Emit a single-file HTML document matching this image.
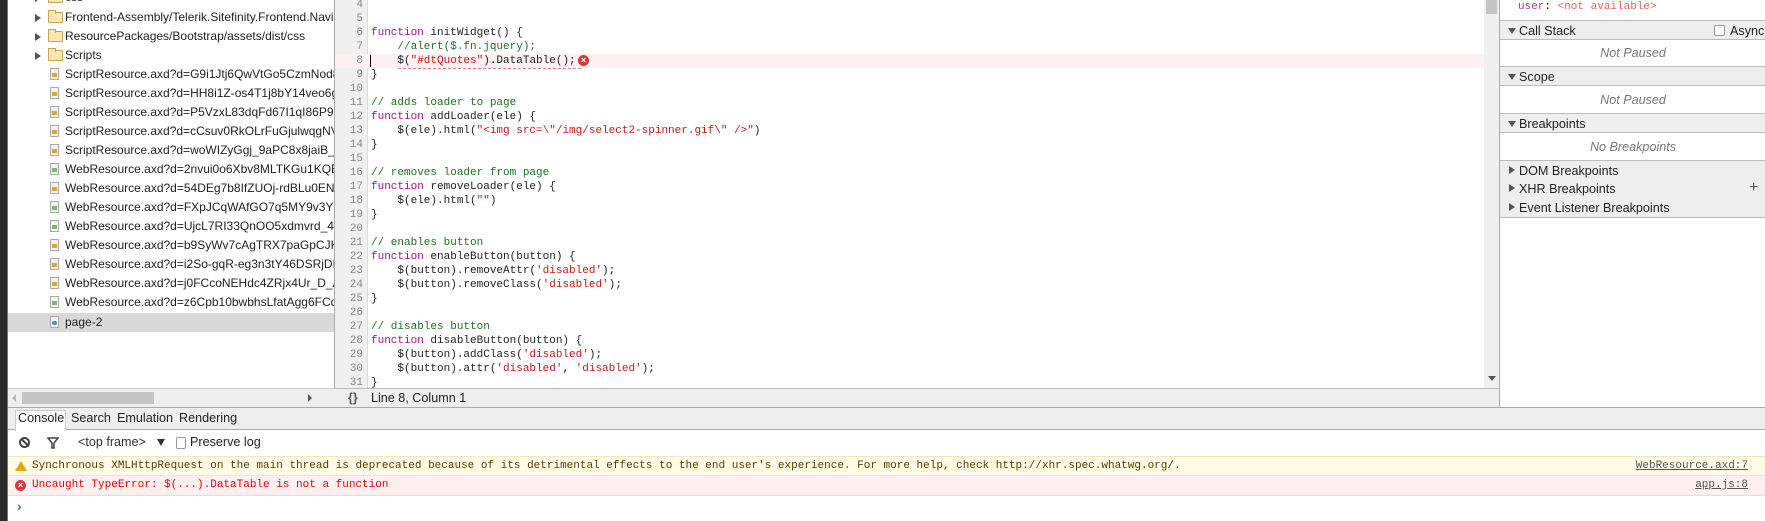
<!DOCTYPE html>
<html><head><meta charset="utf-8"><style>
*{margin:0;padding:0;box-sizing:border-box}
body{width:1765px;height:521px;overflow:hidden;background:#fff;position:relative;font-family:"Liberation Sans",sans-serif;font-size:12px;color:#222}
.abs{position:absolute}
.strip{left:0;top:0;width:8px;height:521px;background:#2b2b2b;border-right:1px solid #777}
#side{left:8px;top:0;width:326px;height:388px;overflow:hidden;background:#fff}
.row{position:absolute;left:0;width:326px;height:19px;line-height:19px;white-space:nowrap;font-size:12px;color:#222}
.arr{position:absolute;left:27px;top:6px;width:0;height:0;border-left:6px solid #555;border-top:4px solid transparent;border-bottom:4px solid transparent}
.fold{position:absolute;left:40px;top:4px;width:15px;height:11px;background:#fbe8b0;border:1px solid #c9a454;border-radius:1px}
.fold:before{content:"";position:absolute;left:-1px;top:-3px;width:6px;height:3px;background:#fbe8b0;border:1px solid #c9a454;border-bottom:none}
.file{position:absolute;left:42px;top:3px;width:9px;height:12px;background:#f2f2f2;border:1px solid #aaa}
.file i{position:absolute;left:1px;top:4px;width:5px;height:4px}
.js i{background:#e3a23b}.css i{background:#7bb86a}.htm i{background:#4a8ee0;border-radius:2px}
.row span{position:absolute;left:57px}
#hs{left:8px;top:388px;width:326px;height:19px;background:#eee;border-top:1px solid #ccc}
#code{left:334px;top:0;width:1150px;height:388px;overflow:hidden;border-left:1px solid #aaa}
#gut{position:absolute;left:0;top:0;width:33px;height:388px;background:#f0f0f0;border-right:1px solid #ddd}
.ln{position:absolute;left:0;width:1150px;height:14px;line-height:14px;font-family:"Liberation Mono",monospace;font-size:11px;white-space:pre}
.ln b{font-weight:normal;position:absolute;left:0;width:28px;text-align:right;color:#888}
.ln span{position:absolute;left:36px}
.k{color:#aa0d91}.c{color:#236e25}.s{color:#c41a16}
#vs{left:1484px;top:0;width:15px;height:388px;background:#f0f0f0}
#right{left:1499px;top:0;width:266px;height:407px;border-left:1px solid #aaa;background:#fff}
.hd{position:absolute;left:0;width:266px;height:20px;line-height:20px;background:#eee;border-top:1px solid #bbb;border-bottom:1px solid #bbb;font-size:12.6px;color:#222}
.hd span{position:absolute;left:19px}
.td{position:absolute;left:8px;top:7px;width:0;height:0;border-top:6px solid #555;border-left:4px solid transparent;border-right:4px solid transparent}
.tr{position:absolute;left:9px;top:5px;width:0;height:0;border-left:6px solid #555;border-top:4px solid transparent;border-bottom:4px solid transparent}
.np{position:absolute;left:0;width:266px;text-align:center;font-style:italic;color:#777;font-size:12.6px}
#status{left:334px;top:388px;width:1165px;height:19px;background:#eee;border-top:1px solid #bbb;font-size:12.6px;line-height:18px}
#tabs{left:8px;top:407px;width:1757px;height:23px;background:#eee;border-top:1px solid #aaa;border-bottom:1px solid #aaa;font-size:12.6px}
#tabs span{position:absolute;top:3px}
#tb{left:8px;top:430px;width:1757px;height:26px;font-size:12.6px}
.msg{position:absolute;left:8px;width:1757px;height:20px;line-height:19px;font-family:"Liberation Mono",monospace;font-size:11px;white-space:pre}
.msg span{position:absolute;left:24px}
.msg u{position:absolute;right:17px;color:#555}
</style></head><body>
<div class="abs strip"></div>
<div class="abs" id="side">
<div class="row" style="top:-12px"><div class="arr"></div><div class="fold"></div><span>css</span></div>
<div class="row" style="top:8px"><div class="arr"></div><div class="fold"></div><span>Frontend-Assembly/Telerik.Sitefinity.Frontend.Navigation</span></div>
<div class="row" style="top:27px"><div class="arr"></div><div class="fold"></div><span>ResourcePackages/Bootstrap/assets/dist/css</span></div>
<div class="row" style="top:46px"><div class="arr"></div><div class="fold"></div><span>Scripts</span></div>
<div class="row" style="top:65px"><div class="file js"><i></i></div><span>ScriptResource.axd?d=G9i1Jtj6QwVtGo5CzmNod8r</span></div>
<div class="row" style="top:84px"><div class="file js"><i></i></div><span>ScriptResource.axd?d=HH8i1Z-os4T1j8bY14veo6gr</span></div>
<div class="row" style="top:103px"><div class="file js"><i></i></div><span>ScriptResource.axd?d=P5VzxL83dqFd67I1qI86P9d8</span></div>
<div class="row" style="top:122px"><div class="file js"><i></i></div><span>ScriptResource.axd?d=cCsuv0RkOLrFuGjulwqgNVm</span></div>
<div class="row" style="top:141px"><div class="file js"><i></i></div><span>ScriptResource.axd?d=woWIZyGgj_9aPC8x8jaiB_hc</span></div>
<div class="row" style="top:160px"><div class="file css"><i></i></div><span>WebResource.axd?d=2nvui0o6Xbv8MLTKGu1KQBe</span></div>
<div class="row" style="top:179px"><div class="file js"><i></i></div><span>WebResource.axd?d=54DEg7b8IfZUOj-rdBLu0ENU</span></div>
<div class="row" style="top:198px"><div class="file css"><i></i></div><span>WebResource.axd?d=FXpJCqWAfGO7q5MY9v3YR8</span></div>
<div class="row" style="top:217px"><div class="file css"><i></i></div><span>WebResource.axd?d=UjcL7RI33QnOO5xdmvrd_406</span></div>
<div class="row" style="top:236px"><div class="file js"><i></i></div><span>WebResource.axd?d=b9SyWv7cAgTRX7paGpCJKhv</span></div>
<div class="row" style="top:255px"><div class="file js"><i></i></div><span>WebResource.axd?d=i2So-gqR-eg3n3tY46DSRjDPe</span></div>
<div class="row" style="top:274px"><div class="file js"><i></i></div><span>WebResource.axd?d=j0FCcoNEHdc4ZRjx4Ur_D_A_X</span></div>
<div class="row" style="top:293px"><div class="file css"><i></i></div><span>WebResource.axd?d=z6Cpb10bwbhsLfatAgg6FCdF</span></div>
<div class="row" style="top:313px;background:#d9d9d9"><div class="file htm"><i></i></div><span>page-2</span></div>
</div>
<div class="abs" id="hs"><div class="abs" style="left:14px;top:3px;width:132px;height:12px;background:#c4c4c4"></div><div class="abs" style="left:4px;top:5px;border-right:4px solid #bbb;border-top:4px solid transparent;border-bottom:4px solid transparent"></div><div class="abs" style="left:300px;top:5px;border-left:4px solid #555;border-top:4px solid transparent;border-bottom:4px solid transparent"></div></div>

<div class="abs" id="code">
<div id="gut"></div>
<div class="abs" style="left:0;top:54px;width:1150px;height:14px;background:#fff1f1"></div>
<div class="ln" style="top:-2px"><b>4</b></div>
<div class="ln" style="top:12px"><b>5</b></div>
<div class="ln" style="top:26px"><b>6</b><span><i class="k" style="font-style:normal">function</i> initWidget() {</span></div>
<div class="ln" style="top:40px"><b>7</b><span class="c">    //alert($.fn.jquery);</span></div>
<div class="ln" style="top:54px"><b>8</b><span>    $(<i class="s" style="font-style:normal">"#dtQuotes"</i>).DataTable();</span></div>
<div class="ln" style="top:68px"><b>9</b><span>}</span></div>
<div class="ln" style="top:82px"><b>10</b></div>
<div class="ln" style="top:96px"><b>11</b><span class="c">// adds loader to page</span></div>
<div class="ln" style="top:110px"><b>12</b><span><i class="k" style="font-style:normal">function</i> addLoader(ele) {</span></div>
<div class="ln" style="top:124px"><b>13</b><span>    $(ele).html(<i class="s" style="font-style:normal">"&lt;img src=\"/img/select2-spinner.gif\" /&gt;"</i>)</span></div>
<div class="ln" style="top:138px"><b>14</b><span>}</span></div>
<div class="ln" style="top:152px"><b>15</b></div>
<div class="ln" style="top:166px"><b>16</b><span class="c">// removes loader from page</span></div>
<div class="ln" style="top:180px"><b>17</b><span><i class="k" style="font-style:normal">function</i> removeLoader(ele) {</span></div>
<div class="ln" style="top:194px"><b>18</b><span>    $(ele).html(<i class="s" style="font-style:normal">""</i>)</span></div>
<div class="ln" style="top:208px"><b>19</b><span>}</span></div>
<div class="ln" style="top:222px"><b>20</b></div>
<div class="ln" style="top:236px"><b>21</b><span class="c">// enables button</span></div>
<div class="ln" style="top:250px"><b>22</b><span><i class="k" style="font-style:normal">function</i> enableButton(button) {</span></div>
<div class="ln" style="top:264px"><b>23</b><span>    $(button).removeAttr(<i class="s" style="font-style:normal">'disabled'</i>);</span></div>
<div class="ln" style="top:278px"><b>24</b><span>    $(button).removeClass(<i class="s" style="font-style:normal">'disabled'</i>);</span></div>
<div class="ln" style="top:292px"><b>25</b><span>}</span></div>
<div class="ln" style="top:306px"><b>26</b></div>
<div class="ln" style="top:320px"><b>27</b><span class="c">// disables button</span></div>
<div class="ln" style="top:334px"><b>28</b><span><i class="k" style="font-style:normal">function</i> disableButton(button) {</span></div>
<div class="ln" style="top:348px"><b>29</b><span>    $(button).addClass(<i class="s" style="font-style:normal">'disabled'</i>);</span></div>
<div class="ln" style="top:362px"><b>30</b><span>    $(button).attr(<i class="s" style="font-style:normal">'disabled'</i>, <i class="s" style="font-style:normal">'disabled'</i>);</span></div>
<div class="ln" style="top:376px"><b>31</b><span>}</span></div>
<div class="abs" style="left:35px;top:55px;width:1px;height:12px;background:#000"></div>
<div class="abs" style="left:63px;top:67px;width:183px;height:2px;border-bottom:1px dashed #f08080"></div>
<div class="abs" style="left:243px;top:55px;width:11px;height:11px;border-radius:50%;background:#d9363e;color:#fff;font-size:9px;line-height:11px;text-align:center;font-weight:bold">×</div>
</div>
<div class="abs" id="vs"><div class="abs" style="left:2px;top:0;width:11px;height:14px;background:#c4c4c4"></div><div class="abs" style="left:4px;top:376px;border-top:5px solid #555;border-left:4px solid transparent;border-right:4px solid transparent"></div></div>

<div class="abs" id="right">
<div class="abs" style="left:18px;top:1px;font-family:'Liberation Mono',monospace;font-size:11px"><span style="color:#a13ca0">user</span>: <span style="color:#f06060">&lt;not available&gt;</span></div>
<div class="hd" style="top:20px"><div class="td"></div><span>Call Stack</span><div class="abs" style="left:214px;top:4px;width:11px;height:11px;border:1px solid #999;border-radius:2px;background:#fff"></div><div class="abs" style="left:230px;top:0">Async</div></div>
<div class="np" style="top:46px">Not Paused</div>
<div class="hd" style="top:66px"><div class="td"></div><span>Scope</span></div>
<div class="np" style="top:93px">Not Paused</div>
<div class="hd" style="top:113px"><div class="td"></div><span>Breakpoints</span></div>
<div class="np" style="top:140px">No Breakpoints</div>
<div class="hd" style="top:160px"><div class="tr"></div><span>DOM Breakpoints</span></div>
<div class="hd" style="top:179px;border-top:none"><div class="tr"></div><span>XHR Breakpoints</span><div class="abs" style="left:249px;top:-1px;font-size:16px;color:#555">+</div></div>
<div class="hd" style="top:198px;border-top:none"><div class="tr"></div><span>Event Listener Breakpoints</span></div>
</div>

<div class="abs" id="status"><span class="abs" style="left:14px;top:0;font-weight:bold;color:#555">{}</span><span class="abs" style="left:37px;top:0">Line 8, Column 1</span></div>
<div class="abs" id="tabs">
<div class="abs" style="left:7px;top:2px;width:51px;height:21px;background:#fff;border:1px solid #ccc;border-bottom:none"></div>
<span style="left:10px">Console</span><span style="left:63px">Search</span><span style="left:109px">Emulation</span><span style="left:171px">Rendering</span>
</div>
<div class="abs" id="tb">
<div class="abs" style="left:11px;top:7px;width:11px;height:11px;border:2px solid #444;border-radius:50%"></div>
<div class="abs" style="left:16px;top:7px;width:2px;height:11px;background:#444;transform:rotate(-45deg)"></div>
<svg class="abs" style="left:39px;top:7px" width="12" height="12"><path d="M1 1H11L7 6V11H5V6Z" fill="none" stroke="#444" stroke-width="1.5"/></svg>
<span class="abs" style="left:70px;top:5px;color:#333">&lt;top frame&gt;</span>
<div class="abs" style="left:149px;top:9px;border-top:7px solid #333;border-left:4px solid transparent;border-right:4px solid transparent"></div>
<div class="abs" style="left:168px;top:7px;width:10px;height:12px;border:1px solid #999;border-radius:2px"></div>
<span class="abs" style="left:182px;top:5px">Preserve log</span>
</div>
<div class="msg" style="top:456px;background:#fffbe6;border-top:1px solid #f3e8b8;border-bottom:1px solid #f5e6c0;color:#5c3b00"><div class="abs" style="left:7px;top:4px;border-bottom:10px solid #e8a500;border-left:6px solid transparent;border-right:6px solid transparent"></div><span>Synchronous XMLHttpRequest on the main thread is deprecated because of its detrimental effects to the end user's experience. For more help, check http://xhr.spec.whatwg.org/.</span><u>WebResource.axd:7</u></div>
<div class="msg" style="top:476px;background:#fff0f0;border-bottom:1px solid #fbd5d5;color:#e00"><div class="abs" style="left:7px;top:4px;width:11px;height:11px;border-radius:50%;background:#d9363e;color:#fff;font-size:9px;line-height:11px;text-align:center;font-family:'Liberation Sans',sans-serif;font-weight:bold">×</div><span>Uncaught TypeError: $(...).DataTable is not a function</span><u>app.js:8</u></div>
<div class="abs" style="left:17px;top:498px;color:#367cf1;font-size:14px;font-weight:bold">›</div>
</body></html>
